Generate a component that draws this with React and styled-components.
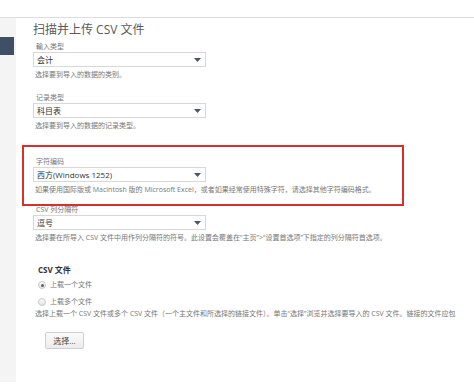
import React from "react";
import styled, { createGlobalStyle } from "styled-components";

const Global = createGlobalStyle`
  html, body { margin: 0; padding: 0; background: #fff; overflow: hidden; }
  body { font-family: "Open Sans", "Noto Sans CJK SC", sans-serif; }
`;

const Page = styled.div`
  width: 474px;
  height: 386px;
  display: flex;
  flex-direction: column;
  font-family: "Open Sans", "Noto Sans CJK SC", sans-serif;
`;

const TopBar = styled.div`
  height: 17px;
  border-bottom: 1px solid #dedede;
  flex: none;
`;

const Body = styled.div`
  display: flex;
  height: 364px;
  flex: none;
`;

const Sidebar = styled.div`
  width: 16px;
  flex: none;
  background: #f4f4f4;
  padding-top: 19px;
`;

const SideTab = styled.div`
  width: 14px;
  height: 18px;
  background: #3e4f66;
`;

const Main = styled.div`
  flex: 1;
  min-width: 0;
  overflow: hidden;
  padding: 4px 0 0 17px;
  display: flex;
  flex-direction: column;
  align-items: flex-start;
`;

const Title = styled.h1`
  margin: 0;
  font-size: 12px;
  line-height: 16px;
  font-weight: 400;
  color: #5a5a5a;
  white-space: nowrap;
`;

const Field = styled.div`
  position: relative;
  margin-top: ${(p) => p.$mt}px;
  display: flex;
  flex-direction: column;
  align-items: flex-start;
`;

const Highlight = styled(Field)`
  &::after {
    content: "";
    position: absolute;
    left: -11px;
    top: -11px;
    width: 382px;
    height: 61px;
    box-sizing: border-box;
    border: 2px solid #d9302c;
    pointer-events: none;
  }
`;

const Label = styled.div`
  font-size: 7px;
  line-height: 11px;
  color: #777;
  padding-left: 3px;
  white-space: nowrap;
`;

const Select = styled.div`
  width: 173px;
  height: 15px;
  box-sizing: border-box;
  border: 1px solid #d8d8d8;
  background: #fff;
  display: flex;
  align-items: center;
  justify-content: space-between;
  padding: 0 4px 0 3px;
  font-size: 8px;
  color: #333;
  white-space: nowrap;
`;

const Arrow = styled.svg`
  width: 7px;
  height: 4px;
  flex: none;
`;

const Help = styled.div`
  margin-top: ${(p) => (p.$mt ?? 3)}px;
  font-size: 7px;
  line-height: 10px;
  color: #777;
  padding-left: 2px;
  white-space: nowrap;
`;

const SectionTitle = styled.div`
  margin-top: 21px;
  margin-left: 5px;
  font-size: 8px;
  line-height: 12px;
  font-weight: 700;
  color: #333;
  white-space: nowrap;
`;

const RadioRow = styled.label`
  display: flex;
  align-items: center;
  gap: 4px;
  margin-top: ${(p) => p.$mt}px;
  margin-left: 5px;
  font-size: 7px;
  line-height: 12px;
  color: #777;
  white-space: nowrap;
`;

const RadioDot = styled.span`
  position: relative;
  width: 8px;
  height: 8px;
  box-sizing: border-box;
  border-radius: 50%;
  border: 1px solid #c9c9c9;
  background: linear-gradient(#fafafa, #e6e6e6);
  flex: none;
  &::after {
    content: "";
    display: ${(p) => (p.$checked ? "block" : "none")};
    position: absolute;
    left: 1.5px;
    top: 1.5px;
    width: 3px;
    height: 3px;
    border-radius: 50%;
    background: #606060;
  }
`;

const Button = styled.button`
  margin-top: 13px;
  margin-left: 12px;
  width: 39px;
  height: 17px;
  box-sizing: border-box;
  border: 1px solid #cfcfcf;
  border-radius: 2px;
  background: linear-gradient(#fbfbfb, #ececec);
  font-family: "Open Sans", "Noto Sans CJK SC", sans-serif;
  font-size: 8px;
  color: #444;
  padding: 0;
`;

const SelectBox = ({ value }) => (
  <Select>
    <span>{value}</span>
    <Arrow viewBox="0 0 7 4">
      <path d="M0 0 H7 L3.5 4 Z" fill="#4a5566" />
    </Arrow>
  </Select>
);

export default function App() {
  return (
    <>
      <Global />
      <Page>
        <TopBar />
        <Body>
          <Sidebar>
            <SideTab />
          </Sidebar>
          <Main>
            <Title>扫描并上传 CSV 文件</Title>
            <Field $mt={3}>
              <Label>輸入类型</Label>
              <SelectBox value="会计" />
              <Help>选择要到导入的数据的类别。</Help>
            </Field>
            <Field $mt={12}>
              <Label>记录类型</Label>
              <SelectBox value="科目表" />
              <Help>选择要到导入的数据的记录类型。</Help>
            </Field>
            <Highlight $mt={25}>
              <Label>字符编码</Label>
              <SelectBox value="西方(Windows 1252)" />
              <Help>
                如果使用国际版或 Macintosh 版的 Microsoft Excel，或者如果经常使用特殊字符，请选择其他字符编码格式。
              </Help>
            </Highlight>
            <Field $mt={9}>
              <Label>CSV 列分隔符</Label>
              <SelectBox value="逗号" />
              <Help>
                选择要在所导入 CSV 文件中用作列分隔符的符号。此设置会覆盖在“主页”&gt;“设置首选项”下指定的列分隔符首选项。
              </Help>
            </Field>
            <SectionTitle>CSV 文件</SectionTitle>
            <RadioRow $mt={3}>
              <RadioDot $checked />
              上载一个文件
            </RadioRow>
            <RadioRow $mt={5}>
              <RadioDot />
              上载多个文件
            </RadioRow>
            <Help $mt={1}>
              选择上载一个 CSV 文件或多个 CSV 文件（一个主文件和所选择的链接文件）。单击“选择”浏览并选择要导入的 CSV 文件。链接的文件应包
            </Help>
            <Button>选择...</Button>
          </Main>
        </Body>
      </Page>
    </>
  );
}
